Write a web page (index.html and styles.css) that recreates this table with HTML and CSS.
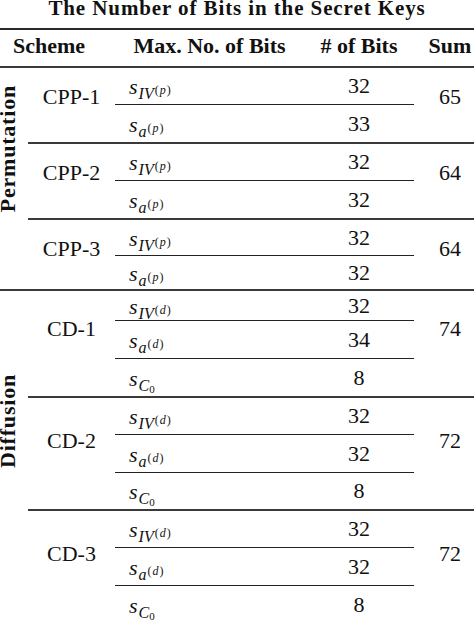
FILE: index.html
```html
<!DOCTYPE html>
<html>
<head>
<meta charset="utf-8">
<link rel="stylesheet" href="styles.css">
</head>
<body>
<div class="page">
  <div class="title">The Number of Bits in the Secret Keys</div>
  <div class="table">
    <div class="head">
      <div class="h-scheme">Scheme</div>
      <div class="h-max">Max. No. of Bits</div>
      <div class="h-num"># of Bits</div>
      <div class="h-sum">Sum</div>
    </div>

    <div class="section perm">
      <div class="side"><span class="side-text">Permutation</span></div>
      <div class="groups">
        <div class="group">
          <div class="scheme">CPP-1</div>
          <div class="keys">
            <div class="key"><div class="sym"><span class="v">s</span><span class="sb">IV<span class="sp">(<i>p</i>)</span></span></div><div class="num">32</div></div>
            <div class="key"><div class="sym"><span class="v">s</span><span class="sb">a<span class="sp">(<i>p</i>)</span></span></div><div class="num">33</div></div>
          </div>
          <div class="sum">65</div>
        </div>
        <div class="group">
          <div class="scheme">CPP-2</div>
          <div class="keys">
            <div class="key"><div class="sym"><span class="v">s</span><span class="sb">IV<span class="sp">(<i>p</i>)</span></span></div><div class="num">32</div></div>
            <div class="key"><div class="sym"><span class="v">s</span><span class="sb">a<span class="sp">(<i>p</i>)</span></span></div><div class="num">32</div></div>
          </div>
          <div class="sum">64</div>
        </div>
        <div class="group">
          <div class="scheme">CPP-3</div>
          <div class="keys">
            <div class="key k35"><div class="sym"><span class="v">s</span><span class="sb">IV<span class="sp">(<i>p</i>)</span></span></div><div class="num">32</div></div>
            <div class="key k34"><div class="sym"><span class="v">s</span><span class="sb">a<span class="sp">(<i>p</i>)</span></span></div><div class="num">32</div></div>
          </div>
          <div class="sum">64</div>
        </div>
      </div>
    </div>

    <div class="section diff">
      <div class="side"><span class="side-text">Diffusion</span></div>
      <div class="groups">
        <div class="group">
          <div class="scheme">CD-1</div>
          <div class="keys">
            <div class="key k29"><div class="sym"><span class="v">s</span><span class="sb">IV<span class="sp">(<i>d</i>)</span></span></div><div class="num">32</div></div>
            <div class="key"><div class="sym"><span class="v">s</span><span class="sb">a<span class="sp">(<i>d</i>)</span></span></div><div class="num">34</div></div>
            <div class="key"><div class="sym"><span class="v">s</span><span class="sb">C<span class="zero">0</span></span></div><div class="num">8</div></div>
          </div>
          <div class="sum">74</div>
        </div>
        <div class="group">
          <div class="scheme">CD-2</div>
          <div class="keys">
            <div class="key"><div class="sym"><span class="v">s</span><span class="sb">IV<span class="sp">(<i>d</i>)</span></span></div><div class="num">32</div></div>
            <div class="key"><div class="sym"><span class="v">s</span><span class="sb">a<span class="sp">(<i>d</i>)</span></span></div><div class="num">32</div></div>
            <div class="key k37"><div class="sym"><span class="v">s</span><span class="sb">C<span class="zero">0</span></span></div><div class="num">8</div></div>
          </div>
          <div class="sum">72</div>
        </div>
        <div class="group">
          <div class="scheme">CD-3</div>
          <div class="keys">
            <div class="key"><div class="sym"><span class="v">s</span><span class="sb">IV<span class="sp">(<i>d</i>)</span></span></div><div class="num">32</div></div>
            <div class="key"><div class="sym"><span class="v">s</span><span class="sb">a<span class="sp">(<i>d</i>)</span></span></div><div class="num">32</div></div>
            <div class="key"><div class="sym"><span class="v">s</span><span class="sb">C<span class="zero">0</span></span></div><div class="num">8</div></div>
          </div>
          <div class="sum">72</div>
        </div>
      </div>
    </div>
  </div>
</div>
</body>
</html>
```

FILE: styles.css
```css
html, body {
  margin: 0;
  padding: 0;
  background: #fff;
  overflow: hidden;
}

.page {
  width: 474px;
  height: 620px;
  overflow: hidden;
  font-family: "Liberation Serif", "Times New Roman", serif;
  color: #111;
}

.title {
  height: 28px;
  font-size: 21px;
  font-weight: bold;
  line-height: 17px;
  letter-spacing: 0.9px;
  text-align: center;
  white-space: nowrap;
}

.table {
  width: 486px;
}

.head {
  display: flex;
  align-items: center;
  height: 38px;
  box-sizing: border-box;
  border-top: 2px solid #2a2a2a;
  padding-bottom: 5px;
  font-size: 22px;
  font-weight: bold;
  line-height: 24px;
  white-space: nowrap;
}

.h-scheme {
  width: 115px;
  box-sizing: border-box;
  padding-left: 13px;
}

.h-max {
  width: 189px;
  text-align: center;
}

.h-num {
  width: 110px;
  text-align: center;
}

.h-sum {
  width: 72px;
  text-align: center;
}

.section {
  display: flex;
  border-top: 2px solid #3a3a3a;
}

.side {
  width: 28px;
  flex: none;
  display: flex;
  flex-direction: column;
  align-items: flex-start;
}

.perm .side {
  padding-top: 17px;
}

.diff .side {
  padding-top: 83px;
}

.side-text {
  writing-mode: vertical-rl;
  transform: rotate(180deg);
  font-size: 22px;
  font-weight: bold;
  line-height: 24px;
  letter-spacing: 0.8px;
  margin-left: -4px;
  white-space: nowrap;
}

.groups {
  display: flex;
  flex-direction: column;
}

.group {
  display: flex;
}

.group + .group {
  border-top: 2px solid #3a3a3a;
}

.scheme,
.sum {
  font-size: 22px;
  line-height: 24px;
  text-align: center;
  white-space: nowrap;
}

.scheme {
  width: 87px;
}

.sum {
  width: 72px;
}

.perm .scheme,
.perm .sum {
  padding-top: 17px;
}

.diff .scheme,
.diff .sum {
  padding-top: 31px;
}

.diff .group:first-child .scheme,
.diff .group:first-child .sum {
  padding-top: 26px;
}

.keys {
  width: 299px;
  display: flex;
  flex-direction: column;
}

.key {
  display: flex;
  align-items: center;
  height: 38px;
  box-sizing: border-box;
}

.key:first-child {
  height: 36px;
}

.key + .key {
  border-top: 1px solid #222;
}

.key.k35 { height: 35px; }
.key.k34 { height: 34px; }
.key.k29 { height: 29px; }
.key.k37 { height: 37px; }

.sym {
  width: 189px;
  box-sizing: border-box;
  padding-left: 14px;
  font-size: 22px;
  line-height: 24px;
  font-style: italic;
  white-space: nowrap;
}

.v {
  vertical-align: -2px;
}

.sb {
  font-size: 16px;
  line-height: 0;
  vertical-align: -7px;
  margin-left: 1px;
}

.sp {
  font-size: 12px;
  font-style: normal;
  line-height: 0;
  letter-spacing: 1px;
  vertical-align: 5px;
  margin-left: 1px;
}

.zero {
  font-size: 11px;
  font-style: normal;
  line-height: 0;
  vertical-align: -2px;
}

.num {
  width: 110px;
  font-size: 22px;
  line-height: 24px;
  text-align: center;
}
```
